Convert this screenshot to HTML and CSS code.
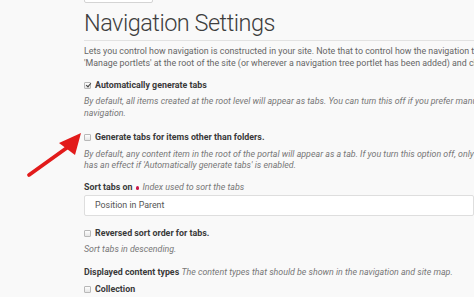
FILE: index.html
```html
<!DOCTYPE html>
<html lang="en">
<head>
	<meta charset="UTF-8">
	<title>Navigation Settings</title>
	<link rel="stylesheet" href="styles.css">
</head>
<body>
	<div class="page">
		<div class="content">
			<div class="topbtn"></div>
			<h1 class="title">Navigation Settings</h1>
			<p class="desc">Lets you control how navigation is constructed in your site. Note that to control how the navigation tree is displayed, you<br>'Manage portlets' at the root of the site (or wherever a navigation tree portlet has been added) and change its settings directly.</p>

			<div class="field first">
				<label class="check"><span class="box on"></span>Automatically generate tabs</label>
				<div class="help">By default, all items created at the root level will appear as tabs. You can turn this off if you prefer manually constructing this part of the<br>navigation.</div>
			</div>

			<div class="field gen">
				<label class="check"><span class="box"></span>Generate tabs for items other than folders.</label>
				<div class="help">By default, any content item in the root of the portal will appear as a tab. If you turn this option off, only folders will be shown. This only<br>has an effect if 'Automatically generate tabs' is enabled.</div>
			</div>

			<div class="field">
				<label class="lbl">Sort tabs on <span class="req"></span> <span class="hint">Index used to sort the tabs</span></label>
				<div class="select">Position in Parent</div>
			</div>

			<div class="field rev">
				<label class="check"><span class="box"></span>Reversed sort order for tabs.</label>
				<div class="help">Sort tabs in descending.</div>
			</div>

			<div class="field types">
				<label class="lbl">Displayed content types <span class="hint">The content types that should be shown in the navigation and site map.</span></label>
				<label class="check sub"><span class="box"></span>Collection</label>
			</div>
		</div>

		<svg class="arrow" width="474" height="297" viewBox="0 0 474 297">
			<line x1="29" y1="175" x2="68" y2="147" stroke="#e21b1b" stroke-width="3.8" stroke-linecap="round"/>
			<polygon points="81,133 59,143 75,155" fill="#e21b1b"/>
		</svg>
	</div>
</body>
</html>
```

FILE: styles.css
```css
* { margin: 0; padding: 0; box-sizing: border-box; }
html, body { height: 100%; }
body { background: #f9f9f9; font-family: Roboto, "Liberation Sans", sans-serif; font-size: 8.85px; line-height: 11.6px; color: #666; overflow: hidden; }
.page { position: relative; width: 474px; height: 297px; overflow: hidden; }
.content { margin-left: 84px; width: 640px; }
.topbtn { width: 69px; height: 16px; margin-top: -13px; background: #fff; border: 1px solid #d4d4d4; border-radius: 2px; }
.title { margin-top: 6px; font-size: 23.5px; line-height: 28px; font-weight: 300; letter-spacing: -0.5px; color: #3e3e3e; padding-bottom: 3px; border-bottom: 1px solid #e2e2e2; width: 600px; }
.desc { margin-top: 5px; white-space: nowrap; }
.field { margin-top: 10.5px; }
.field.gen { margin-top: 12.5px; }
.field.rev { margin-top: 11.5px; }
.field.types { margin-top: 11px; }
.check { display: flex; align-items: center; font-weight: bold; color: #3a3a3a; white-space: nowrap; }
.box { width: 7px; height: 7px; margin-right: 4px; border: 1px solid #b8b8b8; border-radius: 1px; background: linear-gradient(#fdfdfd, #e6e6e6); position: relative; }
.box.on::after { content: ""; position: absolute; left: 1.5px; top: -0.5px; width: 2px; height: 4px; border: solid #444; border-width: 0 1.4px 1.4px 0; transform: rotate(40deg); }
.help { margin-top: 5px; font-style: italic; color: #777; white-space: nowrap; }
.lbl { display: block; font-weight: bold; color: #3a3a3a; white-space: nowrap; }
.req { display: inline-block; width: 3.5px; height: 3.5px; border-radius: 50%; background: #c8184a; margin: 0 1px 0 1px; vertical-align: 0.5px; }
.hint { font-weight: normal; font-style: italic; color: #777; }
.select { margin-top: 1.5px; height: 21px; width: 390px; background: #fff; border: 1px solid #dedede; border-radius: 2px; padding-left: 10px; line-height: 19px; color: #555; }
.sub { margin-top: 5.5px; }
.arrow { position: absolute; left: 0; top: 0; }
```
